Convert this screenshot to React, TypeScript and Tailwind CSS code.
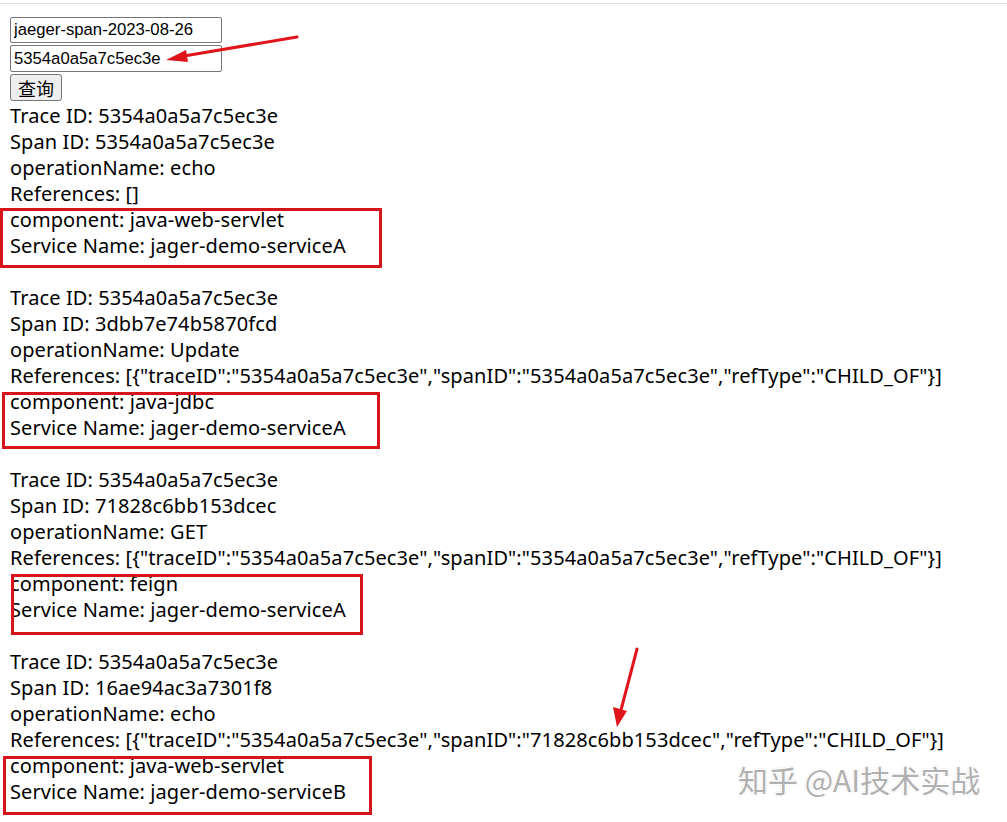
import React from "react";

type Span = {
  traceId: string;
  spanId: string;
  op: string;
  refs: string;
  component: string;
  service: string;
};

const spans: Span[] = [
  {
    traceId: "5354a0a5a7c5ec3e",
    spanId: "5354a0a5a7c5ec3e",
    op: "echo",
    refs: "[]",
    component: "java-web-servlet",
    service: "jager-demo-serviceA",
  },
  {
    traceId: "5354a0a5a7c5ec3e",
    spanId: "3dbb7e74b5870fcd",
    op: "Update",
    refs: '[{"traceID":"5354a0a5a7c5ec3e","spanID":"5354a0a5a7c5ec3e","refType":"CHILD_OF"}]',
    component: "java-jdbc",
    service: "jager-demo-serviceA",
  },
  {
    traceId: "5354a0a5a7c5ec3e",
    spanId: "71828c6bb153dcec",
    op: "GET",
    refs: '[{"traceID":"5354a0a5a7c5ec3e","spanID":"5354a0a5a7c5ec3e","refType":"CHILD_OF"}]',
    component: "feign",
    service: "jager-demo-serviceA",
  },
  {
    traceId: "5354a0a5a7c5ec3e",
    spanId: "16ae94ac3a7301f8",
    op: "echo",
    refs: '[{"traceID":"5354a0a5a7c5ec3e","spanID":"71828c6bb153dcec","refType":"CHILD_OF"}]',
    component: "java-web-servlet",
    service: "jager-demo-serviceB",
  },
];

const boxes = [
  "left-0 top-[208px] w-[382px] h-[60px]",
  "left-[2px] top-[392px] w-[378px] h-[57px]",
  "left-[11px] top-[574px] w-[352px] h-[61px]",
  "left-[3px] top-[756px] w-[369px] h-[59px]",
];

export default function App() {
  return (
    <div className="relative w-[1007px] h-[822px] overflow-hidden bg-white text-black">
      <div className="h-[3px]" />
      <div className="border-t border-[#dcdcdc]" />
      <div className="pl-[10px] pt-[13px]">
        <div className="flex flex-col gap-[2px] items-start">
          <input
            readOnly
            value="jaeger-span-2023-08-26"
            className="block w-[212px] h-[26px] border border-[#767676] rounded-[2px] px-[3px] text-[16.7px] text-black outline-none"
            style={{ fontFamily: '"Liberation Sans", Arial, sans-serif' }}
          />
          <input
            readOnly
            value="5354a0a5a7c5ec3e"
            className="block w-[212px] h-[27px] border border-[#767676] rounded-[2px] px-[3px] text-[16.7px] text-black outline-none"
            style={{ fontFamily: '"Liberation Sans", Arial, sans-serif' }}
          />
          <button className="h-[27px] w-[52px] border border-[#767676] rounded-[3px] bg-[#efefef] text-[18px] leading-none text-black font-['Noto_Sans_CJK_SC',sans-serif]">
            查询
          </button>
        </div>
        <div className="pt-[2px] font-['Noto_Sans','Noto_Sans_CJK_SC',sans-serif] text-[20px] leading-[26px] tracking-[0.1px]">
          {spans.map((s, i) => (
            <div key={i} className="mb-[26px]">
              <div>Trace ID: {s.traceId}</div>
              <div>Span ID: {s.spanId}</div>
              <div>operationName: {s.op}</div>
              <div>References: {s.refs}</div>
              <div>component: {s.component}</div>
              <div>Service Name: {s.service}</div>
            </div>
          ))}
        </div>
      </div>

      {boxes.map((b, i) => (
        <div key={i} className={`absolute ${b} border-[3px] border-[#d7141c] pointer-events-none`} />
      ))}

      <svg className="absolute left-0 top-0 pointer-events-none" width="1007" height="822">
        <line x1="297" y1="37" x2="184" y2="56" stroke="#e0151b" strokeWidth="3" strokeLinecap="round" />
        <polygon points="166,60 186,50 188,62" fill="#e0151b" />
        <line x1="637" y1="649" x2="621" y2="710" stroke="#e0151b" strokeWidth="3" strokeLinecap="round" />
        <polygon points="617,727 613,707 627,711" fill="#e0151b" />
      </svg>

      <div
        className="absolute left-[738px] top-[759px] text-[30px] leading-[40px] text-[#b0b0b0] font-['Noto_Sans_CJK_SC',sans-serif] whitespace-nowrap"
        style={{ textShadow: "1px 1px 0 #fff, -1px -1px 0 #fff, 1px -1px 0 #fff, -1px 1px 0 #fff, 0 0 2px #666" }}
      >
        知乎 @AI技术实战
      </div>
    </div>
  );
}
